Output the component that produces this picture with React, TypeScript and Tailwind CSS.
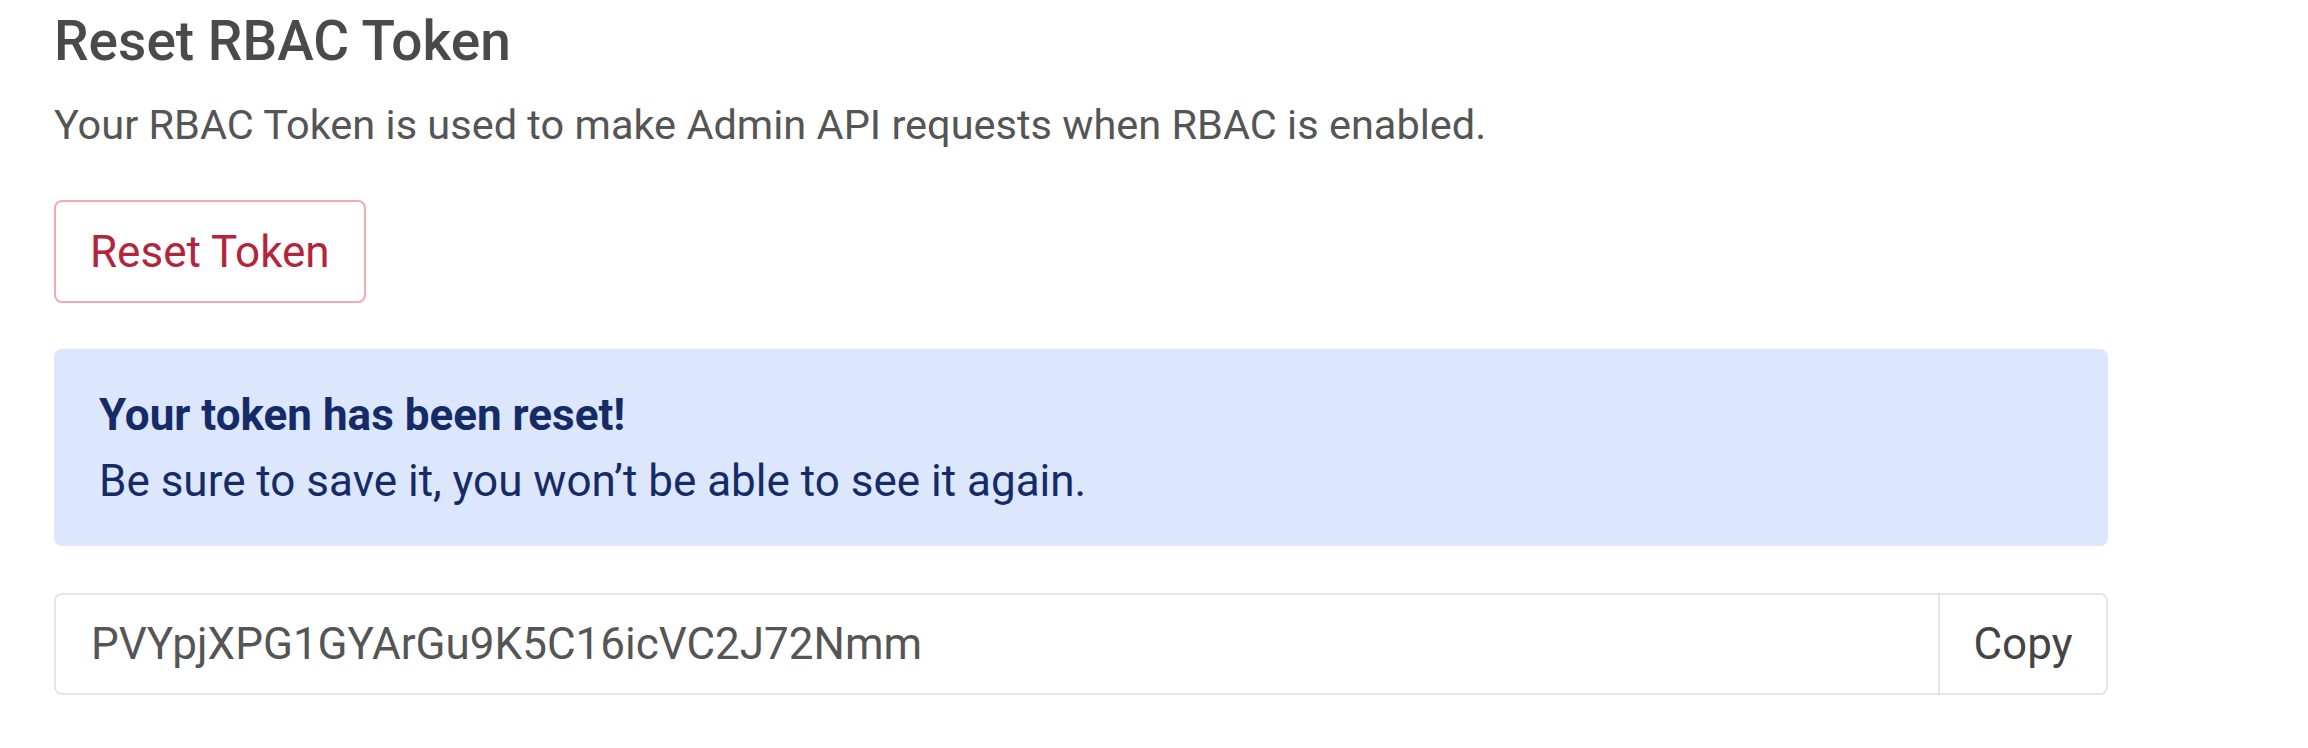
import React from 'react';

const token = 'PVYpjXPG1GYArGu9K5C16icVC2J72Nmm';

export default function App() {
  return (
    <div className="min-h-screen bg-white font-['Roboto','Liberation_Sans',sans-serif]">
      <div className="w-[2054px] ml-[54px] pt-[9px]">
        <h2 className="text-[55px] leading-[65px] font-medium text-[#4a4a4a]">Reset RBAC Token</h2>
        <p className="mt-[19px] text-[41.5px] leading-[64px] text-[#555555]">
          Your RBAC Token is used to make Admin API requests when RBAC is enabled.
        </p>

        <button
          type="button"
          className="mt-[43px] h-[103px] px-[34px] flex items-center border-2 border-[#f0aab0] rounded-[8px] bg-white text-[44px] leading-[64px] text-[#b3253a]"
        >
          Reset Token
        </button>

        <div className="mt-[46px] h-[197px] px-[45px] py-[33px] rounded-[8px] bg-[#dce6fd] text-[#142b68]">
          <p className="text-[44px] leading-[66px] font-bold">Your token has been reset!</p>
          <p className="text-[44px] leading-[66px]">Be sure to save it, you won’t be able to see it again.</p>
        </div>

        <div className="mt-[47px] flex h-[102px]">
          <input
            readOnly
            value={token}
            className="flex-1 min-w-0 h-full px-[35px] border-2 border-r-0 border-[#e5e5e5] rounded-l-[8px] text-[44px] text-[#555555] outline-none bg-white"
          />
          <button
            type="button"
            className="w-[170px] h-full border-2 border-[#e5e5e5] rounded-r-[8px] bg-white text-[44px] text-[#444444]"
          >
            Copy
          </button>
        </div>
      </div>
    </div>
  );
}
